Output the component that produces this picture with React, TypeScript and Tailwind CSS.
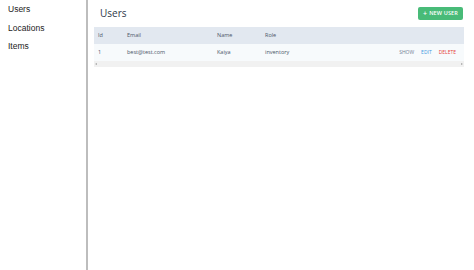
import React from 'react'

const users = [{ id: 1, email: 'best@test.com', name: 'Kaiya', role: 'inventory' }]

export default function App() {
  return (
    <div className="flex h-[270px] w-[474px] bg-white" style={{ fontFamily: '"Open Sans", "Noto Sans", sans-serif' }}>
      {/* Sidebar */}
      <aside className="w-[88px] shrink-0 border-r-2 border-[#bdbdbd] pl-[8px] pt-[4px] text-[#222]" style={{ fontFamily: '"Liberation Sans", Arial, sans-serif' }}>
        <ul className="text-[8.5px] leading-[10px]">
          <li className="h-[18.5px]">Users</li>
          <li className="h-[18.5px]">Locations</li>
          <li className="h-[18.5px]">Items</li>
        </ul>
      </aside>

      {/* Main */}
      <main className="flex-1 px-[6px]">
        <div className="flex items-center justify-between pl-[6px] pr-[5px] pt-[7px] pb-[7px]">
          <h1 className="text-[10px] leading-[13px] text-[#2d3748]">Users</h1>
          <button className="flex h-[13px] w-[45px] items-center justify-center gap-[2px] rounded-[2px] bg-[#48bb78] text-[5.5px] font-semibold tracking-wide text-white">
            <span className="text-[7px] leading-none">+</span> NEW USER
          </button>
        </div>

        <div className="w-[370px]">
          <table className="w-full border-collapse text-left text-[5.5px] text-[#4a5568]">
            <thead>
              <tr className="h-[17px] bg-[#e2e8f0]">
                <th className="pl-[4px] font-normal">Id</th>
                <th className="pl-[4px] font-normal">Email</th>
                <th className="pl-[4px] font-normal">Name</th>
                <th className="pl-[4px] font-normal">Role</th>
                <th></th>
              </tr>
            </thead>
            <tbody>
              {users.map(u => (
                <tr key={u.id} className="h-[17px] bg-[#f7fafc]">
                  <td className="w-[29px] pl-[4px]">{u.id}</td>
                  <td className="w-[90px] pl-[4px]">{u.email}</td>
                  <td className="w-[48px] pl-[4px]">{u.name}</td>
                  <td className="pl-[4px]">{u.role}</td>
                  <td className="pr-[8px] text-right text-[5px]">
                    <span className="text-[#718096]">SHOW</span>
                    <span className="ml-[7px] text-[#4299e1]">EDIT</span>
                    <span className="ml-[7px] text-[#e53e3e]">DELETE</span>
                  </td>
                </tr>
              ))}
            </tbody>
          </table>
          {/* fake horizontal scrollbar */}
          <div className="flex h-[6px] items-center justify-between bg-[#f1f1f1] px-[1px]">
            <span className="h-0 w-0 border-y-[1.5px] border-r-[2px] border-y-transparent border-r-[#a3a3a3]"></span>
            <span className="h-0 w-0 border-y-[1.5px] border-l-[2px] border-y-transparent border-l-[#a3a3a3]"></span>
          </div>
        </div>
      </main>
    </div>
  )
}
